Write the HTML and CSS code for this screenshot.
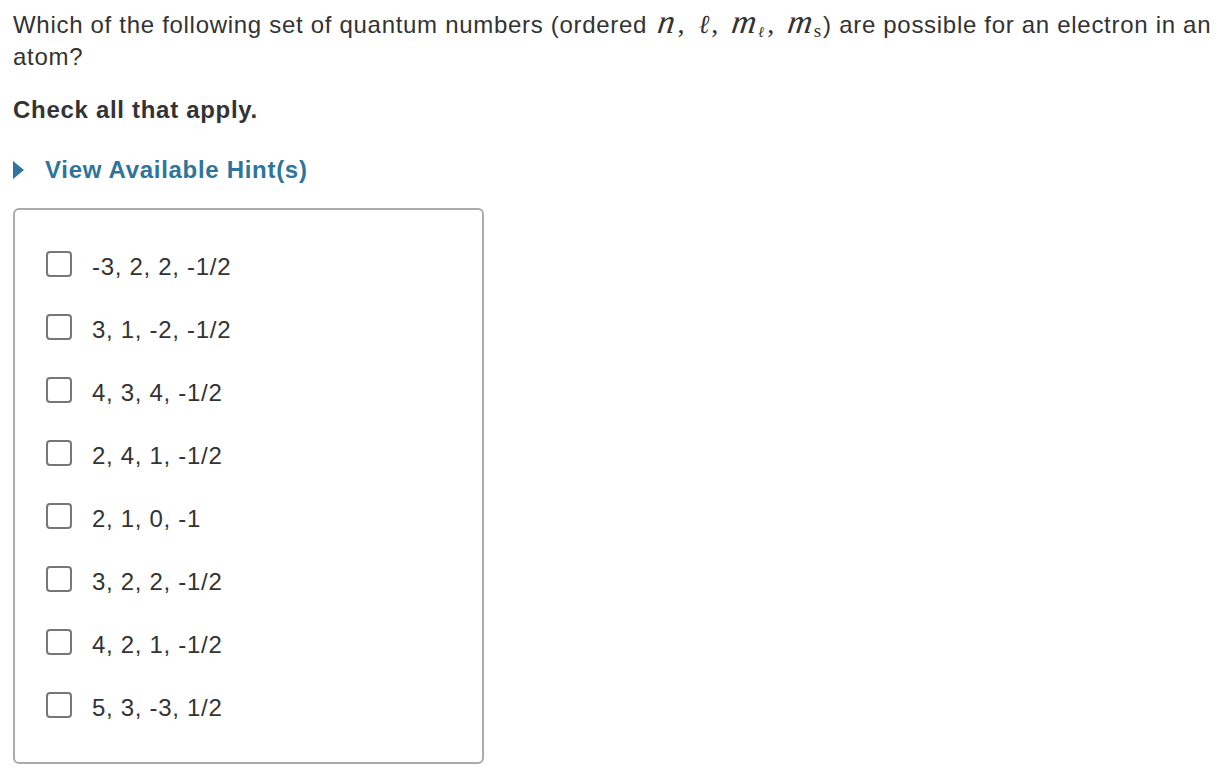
FILE: index.html
```html
<!DOCTYPE html>
<html>
<head>
<meta charset="utf-8">
<link rel="stylesheet" href="styles.css">
</head>
<body>
<div class="page">
  <p class="question">Which of the following set of quantum numbers (ordered <span class="math"><i class="mv mv-n">n</i><span class="mc">,</span><i class="ell">ℓ</i><span class="mc">,</span><i class="mv">m</i><sub class="ell-sub">ℓ</sub><span class="mc">,</span><i class="mv">m</i><sub class="s-sub">s</sub></span>) are possible for an electron in an atom?</p>
  <p class="instr">Check all that apply.</p>
  <div class="hint"><span class="tri"></span><span class="hint-text">View Available Hint(s)</span></div>
  <div class="box">
    <label class="opt"><span class="cb"></span><span class="opt-text">-3, 2, 2, -1/2</span></label>
    <label class="opt"><span class="cb"></span><span class="opt-text">3, 1, -2, -1/2</span></label>
    <label class="opt"><span class="cb"></span><span class="opt-text">4, 3, 4, -1/2</span></label>
    <label class="opt"><span class="cb"></span><span class="opt-text">2, 4, 1, -1/2</span></label>
    <label class="opt"><span class="cb"></span><span class="opt-text">2, 1, 0, -1</span></label>
    <label class="opt"><span class="cb"></span><span class="opt-text">3, 2, 2, -1/2</span></label>
    <label class="opt"><span class="cb"></span><span class="opt-text">4, 2, 1, -1/2</span></label>
    <label class="opt"><span class="cb"></span><span class="opt-text">5, 3, -3, 1/2</span></label>
  </div>
</div>
</body>
</html>
```

FILE: styles.css
```css
html, body {
  margin: 0;
  padding: 0;
  background: #fff;
}
body {
  font-family: "Liberation Sans", Arial, sans-serif;
  color: #333;
  font-size: 24px;
  letter-spacing: 0.7px;
}
.page {
  padding: 9px 4px 0 13px;
}
.question {
  margin: 0;
  line-height: 32px;
}
.math {
  font-family: "Liberation Serif", serif;
  font-size: 28px;
  letter-spacing: 0;
  line-height: 0;
  margin-left: 4px;
}
.mv {
  display: inline-block;
  font-family: "Liberation Serif", serif;
  font-style: italic;
  font-size: 34px;
  transform: skewX(-8deg);
  line-height: 0;
  margin-right: 1px;
}
.mv-n {
  margin-right: 2px;
}
.mc {
  margin-right: 14px;
}
.ell {
  font-family: "DejaVu Serif", serif;
  font-style: italic;
  font-size: 26px;
  margin-right: 2px;
}
.math sub {
  line-height: 0;
  font-style: normal;
}
.ell-sub {
  font-family: "DejaVu Serif", serif;
  font-style: italic !important;
  font-size: 15px;
  vertical-align: -4px;
  margin-right: 3px;
}
.s-sub {
  font-family: "Liberation Serif", serif;
  font-size: 19px;
  vertical-align: -4px;
  margin-right: 2px;
}
.instr {
  margin: 21px 0 0 0;
  font-weight: bold;
  line-height: 32px;
}
.hint {
  margin-top: 28px;
  display: flex;
  align-items: center;
  height: 32px;
  color: #2e7599;
  font-weight: bold;
}
.tri {
  width: 0;
  height: 0;
  border-top: 9px solid transparent;
  border-bottom: 9px solid transparent;
  border-left: 11px solid #2e7599;
  margin-right: 21px;
}
.box {
  margin-top: 22px;
  width: 471px;
  height: 556px;
  border: 2px solid #ababab;
  border-radius: 6px;
  padding-top: 22px;
  box-sizing: border-box;
  display: flex;
  flex-direction: column;
}
.opt {
  display: flex;
  align-items: center;
  height: 63px;
  padding-left: 31px;
  line-height: 32px;
  flex: none;
}
.opt-text {
  padding-top: 7px;
}
.cb {
  width: 22px;
  height: 22px;
  border: 2px solid #777;
  border-radius: 4px;
  margin-right: 20px;
  flex: none;
}
```
